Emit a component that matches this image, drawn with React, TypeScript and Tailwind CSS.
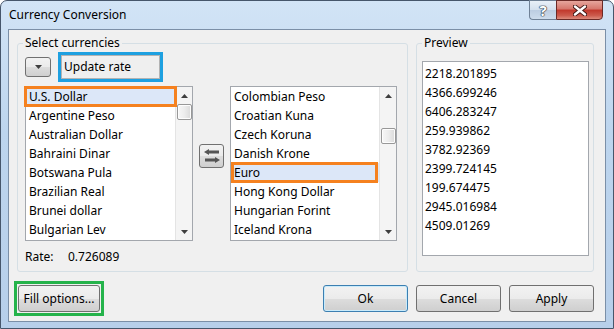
import clsx from "clsx"

const fromCurrencies = [
  "U.S. Dollar",
  "Argentine Peso",
  "Australian Dollar",
  "Bahraini Dinar",
  "Botswana Pula",
  "Brazilian Real",
  "Brunei dollar",
  "Bulgarian Lev",
]

const toCurrencies = [
  "Colombian Peso",
  "Croatian Kuna",
  "Czech Koruna",
  "Danish Krone",
  "Euro",
  "Hong Kong Dollar",
  "Hungarian Forint",
  "Iceland Krona",
]

const previewValues = [
  "2218.201895",
  "4366.699246",
  "6406.283247",
  "259.939862",
  "3782.92369",
  "2399.724145",
  "199.674475",
  "2945.016984",
  "4509.01269",
]

const winButton =
  "rounded-[3px] border bg-[linear-gradient(to_bottom,#f2f2f2_0%,#ebebeb_50%,#dddddd_51%,#cfcfcf_100%)] text-[12px] text-black"

function Arrow({ dir }: { dir: "up" | "down" }) {
  return (
    <svg width="7" height="4" viewBox="0 0 7 4">
      <path d={dir === "up" ? "M0 4L3.5 0L7 4Z" : "M0 0L7 0L3.5 4Z"} fill="#3f3f3f" />
    </svg>
  )
}

function ScrollBar({ thumbClass }: { thumbClass: string }) {
  return (
    <div className="flex w-[17px] shrink-0 flex-col border-l border-[#e4e4e4] bg-[#f4f4f4]">
      <div className="flex h-[17px] items-center justify-center">
        <Arrow dir="up" />
      </div>
      <div className="flex-1 pl-px">
        <div
          className={clsx(
            "h-[16px] w-[15px] rounded-[2px] border border-[#989898] bg-[linear-gradient(to_right,#f7f7f7,#ececec_50%,#dadada)] shadow-[inset_0_0_0_1px_#fdfdfd]",
            thumbClass
          )}
        />
      </div>
      <div className="flex h-[17px] items-center justify-center">
        <Arrow dir="down" />
      </div>
    </div>
  )
}

function ListBox({
  items,
  selected,
  thumbClass,
  markClass,
  className,
}: {
  items: string[]
  selected: string
  thumbClass: string
  markClass: string
  className: string
}) {
  return (
    <div className={clsx("flex h-[155px] border border-[#a3a7ad] bg-white", className)}>
      <div className="flex-1">
        {items.map(item => (
          <div
            key={item}
            className={clsx("relative h-[19px] pl-[3px] leading-[19px]", item === selected && "bg-[#dce7f8]")}
          >
            {item}
            {item === selected && (
              <span className={clsx("absolute -top-px -bottom-px border-[3px] border-[#f5811f]", markClass)} />
            )}
          </div>
        ))}
      </div>
      <ScrollBar thumbClass={thumbClass} />
    </div>
  )
}

export default function App() {
  return (
    <div className="h-[329px] w-[614px] bg-white font-['Noto_Sans','Open_Sans',sans-serif] text-[12px] text-black">
      <div className="flex h-full flex-col rounded-t-[7px] border border-[#46566b] bg-[linear-gradient(to_bottom,#d2e4f6,#bdd5ee_40%,#b7cfea)] px-[7px] pb-[6px]">
        {/* title bar */}
        <div className="flex h-[28px] shrink-0">
          <span className="pt-[6px] pl-px text-[12px] leading-[16px]">Currency Conversion</span>
          <div className="mr-[3px] ml-auto flex h-[20px] -translate-y-px">
            <div className="flex w-[27px] items-center justify-center rounded-bl-[4px] border border-r-0 border-[#6f8196] bg-[linear-gradient(to_bottom,#e8f0f8,#d3e0ee_50%,#bccde1_51%,#cddcec)] text-[15px] leading-none font-bold text-white [text-shadow:0_0_1px_#2c3a4a,0_0_1px_#2c3a4a,0_0_1px_#2c3a4a,0_0_1px_#2c3a4a]">
              ?
            </div>
            <div className="flex w-[47px] items-center justify-center rounded-br-[4px] border border-[#6b2a26] bg-[linear-gradient(to_bottom,#e6a69d,#d5766b_45%,#c1372b_50%,#cc5a4c_80%,#dd8b7c)]">
              <svg width="14" height="11" viewBox="0 0 14 11">
                <path d="M2 1.5L12 9.5M12 1.5L2 9.5" stroke="#3d1512" strokeWidth="4.2" strokeLinecap="round" />
                <path d="M2 1.5L12 9.5M12 1.5L2 9.5" stroke="#ffffff" strokeWidth="2.4" strokeLinecap="round" />
              </svg>
            </div>
          </div>
        </div>

        {/* client area */}
        <div className="flex flex-1 flex-col border border-[#7b8fa7] bg-[#f0f0f0] pt-[5px]">
          <div className="flex gap-[8px] pl-[8px]">
            <fieldset className="h-[237px] w-[391px] rounded-[3px] border border-[#d5dfe5]">
              <legend className="ml-[5px] px-[2px] leading-[16px]">Select currencies</legend>
              <div className="px-[7px]">
                <div className="mt-px flex h-[30px] items-center gap-[7px]">
                  <button className={clsx(winButton, "flex h-[20px] w-[26px] items-center justify-center border-[#707070]")}>
                    <Arrow dir="down" />
                  </button>
                  <div className="h-[30px] w-[105px] border-[3px] border-[#1ea0e0]">
                    <div className="h-full border border-[#b3b3b3] bg-[#efefef] pl-[2px] leading-[22px]">Update rate</div>
                  </div>
                </div>

                <div className="mt-[4px] flex items-start">
                  <ListBox
                    className="w-[168px]"
                    items={fromCurrencies}
                    selected="U.S. Dollar"
                    thumbClass="mt-0"
                    markClass="-right-[2px] -left-[2px]"
                  />
                  <button
                    className={clsx(winButton, "mx-[6px] mt-[58px] flex h-[24px] w-[25px] items-center justify-center border-[#707070]")}
                  >
                    <svg width="16" height="14" viewBox="0 0 16 14">
                      <path d="M0 3L5 0V6Z M5 1.5H15V4.5H5Z" fill="#555555" />
                      <path d="M16 11L11 8V14Z M1 9.5H11V12.5H1Z" fill="#555555" />
                    </svg>
                  </button>
                  <ListBox
                    className="w-[167px]"
                    items={toCurrencies}
                    selected="Euro"
                    thumbClass="mt-[24px]"
                    markClass="right-px left-0"
                  />
                </div>

                <div className="mt-[8px] flex leading-[16px]">
                  <span className="w-[43px]">Rate:</span>
                  <span>0.726089</span>
                </div>
              </div>
            </fieldset>

            <fieldset className="h-[237px] w-[178px] rounded-[3px] border border-[#d5dfe5]">
              <legend className="ml-[5px] px-[2px] leading-[16px]">Preview</legend>
              <div className="mt-[10px] ml-[5px] h-[195px] w-[167px] border border-[#a3a7ad] bg-white pt-[2px] pl-[2px]">
                {previewValues.map(value => (
                  <div key={value} className="h-[19px] leading-[19px]">
                    {value}
                  </div>
                ))}
              </div>
            </fieldset>
          </div>

          {/* bottom buttons */}
          <div className="mt-[9px] flex items-center pr-[11px] pl-[5px]">
            <div className="border-[3px] border-[#25b34b] p-px">
              <button className={clsx(winButton, "h-[27px] w-[82px] border-[#707070]")}>Fill options...</button>
            </div>
            <div className="ml-auto flex gap-[8px]">
              <button
                className={clsx(winButton, "h-[27px] w-[85px] border-[#3c7fb1] shadow-[inset_0_0_0_1px_#c9ebfb]")}
              >
                Ok
              </button>
              <button className={clsx(winButton, "h-[27px] w-[85px] border-[#707070]")}>Cancel</button>
              <button className={clsx(winButton, "h-[27px] w-[85px] border-[#707070]")}>Apply</button>
            </div>
          </div>
        </div>
      </div>
    </div>
  )
}
